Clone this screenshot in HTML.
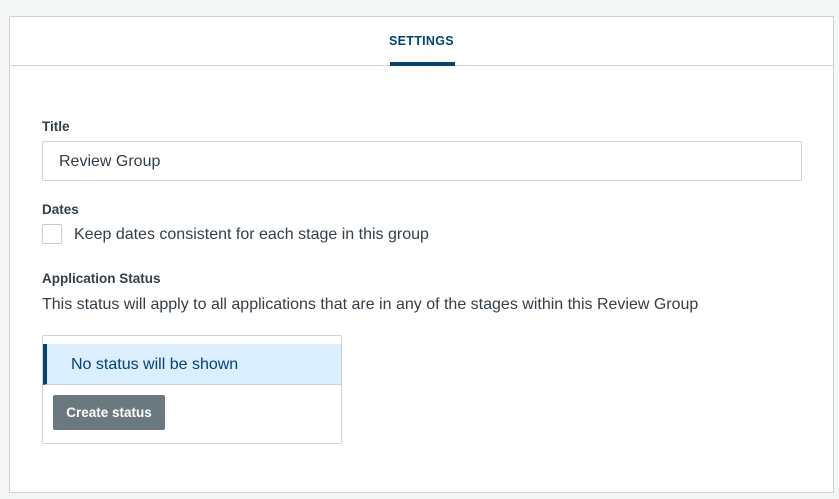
<!DOCTYPE html>
<html><head><meta charset="utf-8"><style>
*{box-sizing:border-box;margin:0;padding:0}
body{width:839px;height:499px;background:#f5f6f6;font-family:"Liberation Sans",sans-serif;position:relative;overflow:hidden;color:#333e48}
.panel{position:absolute;left:9px;top:16px;width:825px;height:477px;background:#fff;border:1px solid #d0d2d3}
.hdr{position:absolute;left:0;top:0;width:100%;height:49px;border-bottom:1px solid #d0d2d3}
.tab{position:absolute;left:379px;top:17px;font-size:12.5px;font-weight:bold;color:#00427a;letter-spacing:0.3px}
.ul{position:absolute;left:380px;top:45px;width:65px;height:4px;background:#00427a}
.abs{position:absolute}
.lbl{font-size:13.5px;font-weight:bold;color:#333e48}
.txt{font-size:16px;color:#333e48}
</style></head><body>
<div class="panel">
 <div class="hdr"><div class="tab">SETTINGS</div><div class="ul"></div></div>
</div>
<div class="abs lbl" style="left:42px;top:119px">Title</div>
<div class="abs" style="left:42px;top:141px;width:760px;height:40px;border:1px solid #d0d2d3;border-radius:2px;font-size:16px;padding:11px 0 0 16px;color:#333e48">Review Group</div>
<div class="abs lbl" style="left:42px;top:202px">Dates</div>
<div class="abs" style="left:42px;top:224px;width:20px;height:20px;border:1px solid #c9cbcc;border-radius:2px"></div>
<div class="abs txt" style="left:74px;top:226px">Keep dates consistent for each stage in this group</div>
<div class="abs lbl" style="left:42px;top:271px">Application Status</div>
<div class="abs txt" style="left:42px;top:296px">This status will apply to all applications that are in any of the stages within this Review Group</div>
<div class="abs" style="left:42px;top:335px;width:300px;height:109px;border:1px solid #d0d2d3;border-radius:2px"></div>
<div class="abs" style="left:43px;top:344px;width:298px;height:41px;background:#dcefff;border-left:4px solid #00427a;border-bottom:1px solid #d0d2d3;font-size:16px;color:#00427a;padding:12px 0 0 24px">No status will be shown</div>
<div class="abs" style="left:53px;top:395px;width:112px;height:35px;background:#6a787f;border-radius:2px;color:#fff;font-size:13.5px;font-weight:bold;text-align:center;line-height:36px">Create status</div>
</body></html>
